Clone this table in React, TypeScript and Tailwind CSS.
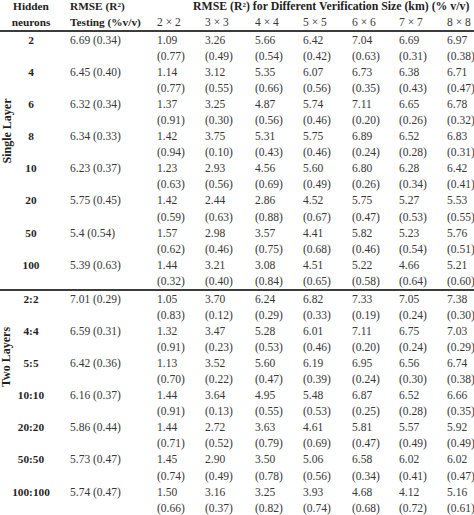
import React from "react";

type Row = { n: string; test: string; v: [string, string][] };

const single: Row[] = [
  { n: "2", test: "6.69 (0.34)", v: [["1.09", "0.77"], ["3.26", "0.49"], ["5.66", "0.54"], ["6.42", "0.42"], ["7.04", "0.63"], ["6.69", "0.31"], ["6.97", "0.38"]] },
  { n: "4", test: "6.45 (0.40)", v: [["1.14", "0.77"], ["3.12", "0.55"], ["5.35", "0.66"], ["6.07", "0.56"], ["6.73", "0.35"], ["6.38", "0.43"], ["6.71", "0.47"]] },
  { n: "6", test: "6.32 (0.34)", v: [["1.37", "0.91"], ["3.25", "0.30"], ["4.87", "0.56"], ["5.74", "0.46"], ["7.11", "0.20"], ["6.65", "0.26"], ["6.78", "0.32"]] },
  { n: "8", test: "6.34 (0.33)", v: [["1.42", "0.94"], ["3.75", "0.10"], ["5.31", "0.43"], ["5.75", "0.46"], ["6.89", "0.24"], ["6.52", "0.28"], ["6.83", "0.31"]] },
  { n: "10", test: "6.23 (0.37)", v: [["1.23", "0.63"], ["2.93", "0.56"], ["4.56", "0.69"], ["5.60", "0.49"], ["6.80", "0.26"], ["6.28", "0.34"], ["6.42", "0.41"]] },
  { n: "20", test: "5.75 (0.45)", v: [["1.42", "0.59"], ["2.44", "0.63"], ["2.86", "0.88"], ["4.52", "0.67"], ["5.75", "0.47"], ["5.27", "0.53"], ["5.53", "0.55"]] },
  { n: "50", test: "5.4 (0.54)", v: [["1.57", "0.62"], ["2.98", "0.46"], ["3.57", "0.75"], ["4.41", "0.68"], ["5.82", "0.46"], ["5.23", "0.54"], ["5.76", "0.51"]] },
  { n: "100", test: "5.39 (0.63)", v: [["1.44", "0.32"], ["3.21", "0.40"], ["3.08", "0.84"], ["4.51", "0.65"], ["5.22", "0.58"], ["4.66", "0.64"], ["5.21", "0.60"]] },
];

const two: Row[] = [
  { n: "2:2", test: "7.01 (0.29)", v: [["1.05", "0.83"], ["3.70", "0.12"], ["6.24", "0.29"], ["6.82", "0.33"], ["7.33", "0.19"], ["7.05", "0.24"], ["7.38", "0.30"]] },
  { n: "4:4", test: "6.59 (0.31)", v: [["1.32", "0.91"], ["3.47", "0.23"], ["5.28", "0.53"], ["6.01", "0.46"], ["7.11", "0.20"], ["6.75", "0.24"], ["7.03", "0.29"]] },
  { n: "5:5", test: "6.42 (0.36)", v: [["1.13", "0.70"], ["3.52", "0.22"], ["5.60", "0.47"], ["6.19", "0.39"], ["6.95", "0.24"], ["6.56", "0.30"], ["6.74", "0.38"]] },
  { n: "10:10", test: "6.16 (0.37)", v: [["1.44", "0.91"], ["3.64", "0.13"], ["4.95", "0.55"], ["5.48", "0.53"], ["6.87", "0.25"], ["6.52", "0.28"], ["6.66", "0.35"]] },
  { n: "20:20", test: "5.86 (0.44)", v: [["1.44", "0.71"], ["2.72", "0.52"], ["3.63", "0.79"], ["4.61", "0.69"], ["5.81", "0.47"], ["5.57", "0.49"], ["5.92", "0.49"]] },
  { n: "50:50", test: "5.73 (0.47)", v: [["1.45", "0.74"], ["2.90", "0.49"], ["3.50", "0.78"], ["5.06", "0.56"], ["6.58", "0.34"], ["6.02", "0.41"], ["6.02", "0.47"]] },
  { n: "100:100", test: "5.74 (0.47)", v: [["1.50", "0.66"], ["3.16", "0.37"], ["3.25", "0.82"], ["3.93", "0.74"], ["4.68", "0.68"], ["4.12", "0.72"], ["5.16", "0.61"]] },
];

const grid = "grid grid-cols-[70px_87px_48px_50px_48px_49px_47px_48px_1fr] whitespace-nowrap";

function Group({ r }: { r: Row }) {
  return (
    <>
      <div className={`${grid} leading-[16.1px]`}>
        <div className="pr-[8px] text-center text-[11.3px] font-bold text-[#1e1e1e]">{r.n}</div>
        <div>{r.test}</div>
        {r.v.map(([a], i) => (
          <div key={i}>{a}</div>
        ))}
      </div>
      <div className={`${grid} leading-[16.1px]`}>
        <div />
        <div />
        {r.v.map(([, b], i) => (
          <div key={i} className="flex items-center">
            ({b})
            {i === 6 && <span className="ml-[1px] inline-block h-[9px] w-[3px] bg-[#2a2a2a]" />}
          </div>
        ))}
      </div>
    </>
  );
}

function Block({ label, rows, top }: { label: string; rows: Row[]; top: string }) {
  return (
    <div className="relative">
      <div className={`absolute left-[-1px] ${top} flex h-0 w-[14px] items-center justify-center`}>
        <span className="rotate-[-90deg] whitespace-nowrap font-bold text-[12px] text-[#1e1e1e]">{label}</span>
      </div>
      {rows.map((r) => (
        <Group key={r.n} r={r} />
      ))}
    </div>
  );
}

export default function App() {
  return (
    <div
      className="h-[515px] w-[474px] overflow-hidden bg-white text-[11.5px] text-[#363636]"
      style={{ fontFamily: '"Liberation Serif", "Times New Roman", serif' }}
    >
      <div className="mt-[-2px]">
        <div className={`${grid} leading-[16px] font-bold text-[#1e1e1e]`}>
          <div className="pr-[8px] text-center text-[11.3px]">Hidden</div>
          <div className="text-[11.3px]">
            RMSE (R<sup className="text-[7px] leading-none">2</sup>)
          </div>
          <div className="col-span-7 pl-[36px] text-[11.8px]">
            RMSE (R<sup className="text-[7px] leading-none">2</sup>) for Different Verification Size (km) (% v/v)
          </div>
        </div>
        <div className={`${grid} leading-[16px]`}>
          <div className="pr-[8px] text-center text-[11.3px] font-bold text-[#1e1e1e]">neurons</div>
          <div className="text-[11.3px] font-bold text-[#1e1e1e]">Testing (%v/v)</div>
          <div>2 × 2</div>
          <div>3 × 3</div>
          <div>4 × 4</div>
          <div>5 × 5</div>
          <div>6 × 6</div>
          <div>7 × 7</div>
          <div>8 × 8</div>
        </div>
      </div>
      <div className="h-[1.5px] bg-[#3c3c3c]" />
      <Block label="Single Layer" rows={single} top="top-[99px]" />
      <div className="h-[1.5px] bg-[#3c3c3c]" />
      <Block label="Two Layers" rows={two} top="top-[66px]" />
    </div>
  );
}
